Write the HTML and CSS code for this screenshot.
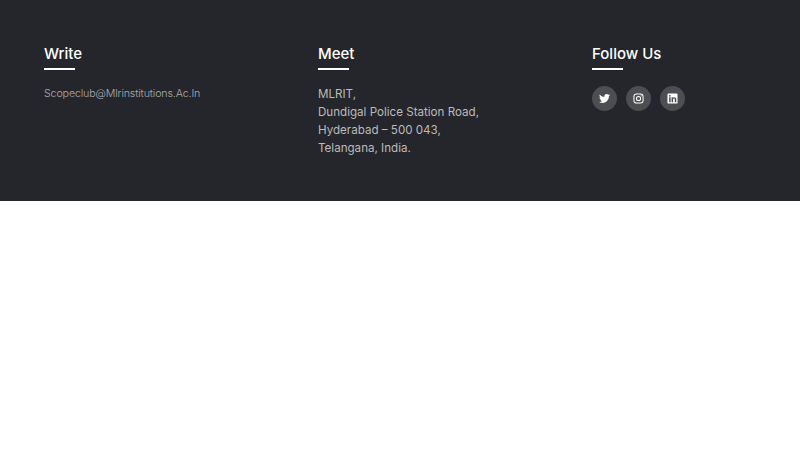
FILE: index.html
```html
<!DOCTYPE html>
<html lang="en">
<head>
    <meta charset="UTF-8">
    <meta name="viewport" content="width=device-width, initial-scale=1.0">
    <title>Footer</title>
    <link rel="stylesheet" href="styles.css">
</head>
<body>
    <footer class="footer">
        <div class="footer-col">
            <h4 class="footer-title">Write</h4>
            <p class="footer-mail">Scopeclub@Mlrinstitutions.Ac.In</p>
        </div>
        <div class="footer-col">
            <h4 class="footer-title">Meet</h4>
            <p class="footer-address">MLRIT,<br>Dundigal Police Station Road,<br>Hyderabad – 500 043,<br>Telangana, India.</p>
        </div>
        <div class="footer-col">
            <h4 class="footer-title">Follow Us</h4>
            <div class="social-links">
                <a class="social-link" href="#" aria-label="Twitter">
                    <svg viewBox="0 0 24 24" width="11" height="11"><path fill="currentColor" d="M23.95 4.57a10 10 0 0 1-2.82.77 4.96 4.96 0 0 0 2.16-2.72c-.95.55-2 .96-3.13 1.19a4.92 4.92 0 0 0-8.38 4.48C7.69 8.09 4.07 6.13 1.64 3.16a4.82 4.82 0 0 0-.66 2.47c0 1.71.87 3.21 2.19 4.1a4.9 4.9 0 0 1-2.23-.61v.06c0 2.39 1.7 4.38 3.95 4.83a5 5 0 0 1-2.21.08 4.94 4.94 0 0 0 4.6 3.42A9.87 9.87 0 0 1 0 19.54a14 14 0 0 0 7.56 2.21c9.05 0 14-7.5 14-13.98 0-.21 0-.42-.02-.63a9.94 9.94 0 0 0 2.41-2.57z"/></svg>
                </a>
                <a class="social-link" href="#" aria-label="Instagram">
                    <svg viewBox="0 0 24 24" width="11" height="11"><rect x="2" y="2" width="20" height="20" rx="5.5" fill="none" stroke="currentColor" stroke-width="2.2"/><circle cx="12" cy="12" r="4.6" fill="none" stroke="currentColor" stroke-width="2.2"/><circle cx="17.8" cy="6.2" r="1.3" fill="currentColor"/></svg>
                </a>
                <a class="social-link" href="#" aria-label="LinkedIn">
                    <svg viewBox="0 0 24 24" width="11" height="11"><path fill="currentColor" fill-rule="evenodd" d="M3 1h18a2 2 0 0 1 2 2v18a2 2 0 0 1-2 2H3a2 2 0 0 1-2-2V3a2 2 0 0 1 2-2zm1.600 8.300V20h3.300V9.300zM6.200 4.200a1.900 1.900 0 1 0 0 3.800 1.900 1.900 0 0 0 0-3.800zM10 9.300V20h3.300v-5.300c0-1.400.3-2.700 2-2.700s1.700 1.600 1.700 2.800V20h3.300v-5.900c0-2.900-.6-5-4-5-1.600 0-2.700.9-3.100 1.700V9.300z"/></svg>
                </a>
            </div>
        </div>
    </footer>
</body>
</html>
```

FILE: styles.css
```css
body {
    margin: 0;
    background-color: #fff;
    font-family: "Inter", "Noto Sans", sans-serif;
}

.footer {
    display: grid;
    grid-template-columns: 274px 274px 1fr;
    height: 201px;
    box-sizing: border-box;
    padding: 43px 0 0 44px;
    background-color: #24262b;
}

.footer-title {
    margin: 0 0 9px;
    padding-bottom: 7px;
    color: #fff;
    font-size: 15px;
    font-weight: 500;
    line-height: 22px;
}

/* short underline below each heading */
.footer-title::after {
    content: "";
    display: block;
    width: 31px;
    height: 2px;
    margin-top: 3px;
    background-color: #fff;
}

.footer-mail {
    margin: 0;
    color: #adadaf;
    font-size: 10.7px;
    font-weight: 300;
    letter-spacing: -0.15px;
    line-height: 16px;
}

.footer-address {
    margin: -1px 0 0;
    color: #bbbbbb;
    font-size: 11.6px;
    font-weight: 400;
    line-height: 18px;
}

.social-links {
    display: flex;
    gap: 9px;
}

.social-link {
    display: flex;
    align-items: center;
    justify-content: center;
    width: 25px;
    height: 25px;
    border-radius: 50%;
    background-color: #4d4e52;
    color: #fff;
}
```
